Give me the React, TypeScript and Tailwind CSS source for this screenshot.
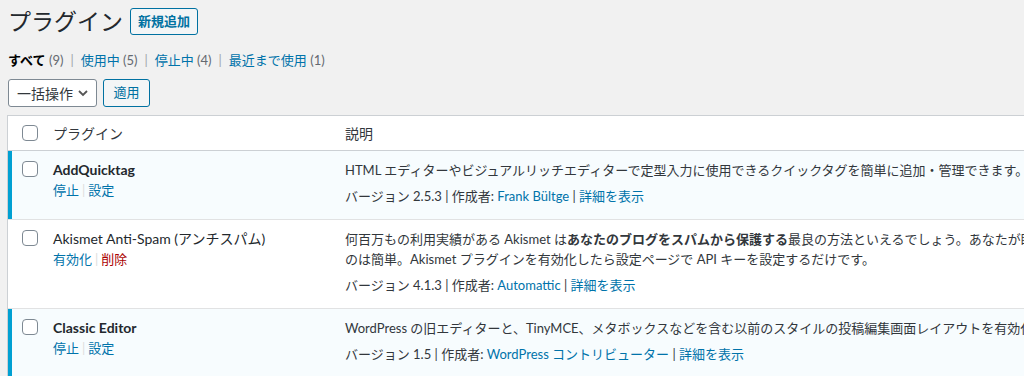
import React from "react";

const font = "font-['Lato','Noto_Sans_CJK_JP',sans-serif]";

const Checkbox: React.FC = () => (
    <span className="block w-4 h-4 rounded-[4px] border border-[#7e8993] bg-white" />
);

const Sep: React.FC = () => <span className="text-[#a0a5aa] mx-[7px]">|</span>;

type Plugin = {
    name: string;
    active: boolean;
    actions: { label: string; danger?: boolean }[];
    desc: React.ReactNode;
    version: string;
    author: string;
};

const plugins: Plugin[] = [
    {
        name: "AddQuicktag",
        active: true,
        actions: [{ label: "停止" }, { label: "設定" }],
        desc: <p>HTML エディターやビジュアルリッチエディターで定型入力に使用できるクイックタグを簡単に追加・管理できます。</p>,
        version: "2.5.3",
        author: "Frank Bültge",
    },
    {
        name: "Akismet Anti-Spam (アンチスパム)",
        active: false,
        actions: [{ label: "有効化" }, { label: "削除", danger: true }],
        desc: (
            <p>
                何百万もの利用実績がある Akismet は<strong className="font-bold">あなたのブログをスパムから保護する</strong>最良の方法といえるでしょう。あなたが眠っている間もサイトを守ります。始める
                <br />
                のは簡単。Akismet プラグインを有効化したら設定ページで API キーを設定するだけです。
            </p>
        ),
        version: "4.1.3",
        author: "Automattic",
    },
    {
        name: "Classic Editor",
        active: true,
        actions: [{ label: "停止" }, { label: "設定" }],
        desc: <p>WordPress の旧エディターと、TinyMCE、メタボックスなどを含む以前のスタイルの投稿編集画面レイアウトを有効化します。</p>,
        version: "1.5",
        author: "WordPress コントリビューター",
    },
];

const PluginRow: React.FC<{ p: Plugin }> = ({ p }) => (
    <div
        className={`flex border-b border-[#e1e2e3] ${p.active ? "bg-[#f7fcfe]" : "bg-white"}`}
    >
        <div
            className={`w-[35px] shrink-0 pt-[10px] ${p.active ? "border-l-4 border-[#00a0d2] pl-[10px]" : "pl-[14px]"}`}
        >
            <Checkbox />
        </div>
        <div className="w-[292px] shrink-0 pl-[10px] pt-[9px] pb-[13px]">
            <div
                className={`text-[14px] leading-[20px] text-[#23282d] ${p.active ? "font-bold" : "font-normal"}`}
            >
                {p.name}
            </div>
            <div className="text-[13px] leading-[20px]">
                {p.actions.map((a, i) => (
                    <React.Fragment key={a.label}>
                        {i > 0 && <span className="text-[#ddd] mx-[3px]">|</span>}
                        <span className={a.danger ? "text-[#a00]" : "text-[#0073aa]"}>{a.label}</span>
                    </React.Fragment>
                ))}
            </div>
        </div>
        <div className="flex-1 pl-[10px] pt-[9px] pb-[13px] text-[13px] leading-[20px] text-[#32373c] whitespace-nowrap">
            {p.desc}
            <div className="mt-[6px]">
                バージョン {p.version} | 作成者: <span className="text-[#0073aa]">{p.author}</span> |{" "}
                <span className="text-[#0073aa]">詳細を表示</span>
            </div>
        </div>
    </div>
);

export default function App() {
    return (
        <div className={`w-[1024px] h-[376px] overflow-hidden bg-[#f1f1f1] ${font} text-[#23282d]`}>
            <div className="flex items-center pl-[8px] pt-[8px] gap-[7px]">
                <h1 className="text-[23px] leading-[27px] font-normal text-[#23282d]">プラグイン</h1>
                <button className="h-[27px] px-[7px] border border-[#0071a1] rounded-[3px] bg-[#f3f5f6] text-[#0071a1] text-[13px] font-bold">
                    新規追加
                </button>
            </div>
            <div className="pl-[8px] mt-[15px] text-[13px] leading-[20px] text-[#646970]">
                <span className="font-bold text-black">すべて</span> (9)
                <Sep />
                <span className="text-[#0073aa]">使用中</span> (5)
                <Sep />
                <span className="text-[#0073aa]">停止中</span> (4)
                <Sep />
                <span className="text-[#0073aa]">最近まで使用</span> (1)
            </div>
            <div className="flex gap-[6px] pl-[8px] mt-[9px]">
                <div className="flex items-center justify-between w-[89px] h-[28px] border border-[#7e8993] rounded-[3px] bg-white pl-[8px] pr-[7px] text-[14px] text-[#32373c]">
                    一括操作
                    <svg width="12" height="12" viewBox="0 0 12 12" fill="none" stroke="#555" strokeWidth="1.8">
                        <path d="M2 4l4 4 4-4" />
                    </svg>
                </div>
                <button className="w-[47px] h-[28px] border border-[#0071a1] rounded-[3px] bg-[#f3f5f6] text-[#0071a1] text-[13px]">
                    適用
                </button>
            </div>
            <div className="ml-[7px] mt-[8px] w-[1300px] border border-[#ccd0d4] bg-white">
                <div className="flex h-[35px] items-center border-b border-[#ccd0d4] text-[14px] text-[#32373c]">
                    <div className="w-[35px] shrink-0 pl-[14px]">
                        <Checkbox />
                    </div>
                    <div className="w-[292px] shrink-0 pl-[10px]">プラグイン</div>
                    <div className="flex-1 pl-[10px]">説明</div>
                </div>
                {plugins.map((p) => (
                    <PluginRow key={p.name} p={p} />
                ))}
            </div>
        </div>
    );
}
